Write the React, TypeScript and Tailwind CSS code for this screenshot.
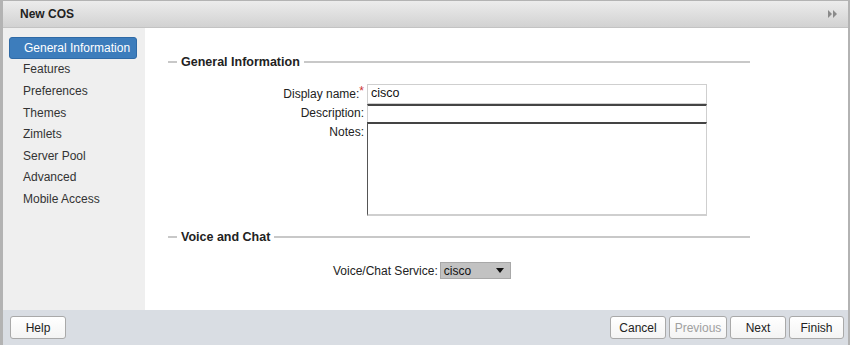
import React from "react";

const items = [
  "General Information",
  "Features",
  "Preferences",
  "Themes",
  "Zimlets",
  "Server Pool",
  "Advanced",
  "Mobile Access",
];

function Btn({ children, disabled, w }: { children: React.ReactNode; disabled?: boolean; w: string }) {
  return (
    <div
      className={`${w} h-[23px] flex items-center justify-center rounded-[3px] border border-[#a9a9a9] bg-gradient-to-b from-white to-[#f4f4f4] text-[12px] ${
        disabled ? "text-[#a0a0a0]" : "text-[#222]"
      }`}
    >
      {children}
    </div>
  );
}

export default function App() {
  return (
    <div
      className="w-[850px] h-[345px] flex flex-col bg-white border-l-[3px] border-r-2 border-t border-[#b3b3b3] text-[12px] text-[#222]"
      style={{ fontFamily: '"Liberation Sans", Arial, sans-serif' }}
    >
      <div className="h-[27px] flex items-center justify-between pl-[17px] pr-[10px] bg-gradient-to-b from-[#ececec] to-[#d2d2d2] border-b border-[#c3c3c3]">
        <span className="font-bold text-[12px] text-[#222] -mt-[1px]">New COS</span>
        <svg width="10" height="8" viewBox="0 0 10 8">
          <polygon points="0,0 4,4 0,8" fill="#8a8a8a" />
          <polygon points="5,0 9,4 5,8" fill="#8a8a8a" />
        </svg>
      </div>
      <div className="flex flex-1">
        <div className="w-[142px] bg-[#efefef] pt-[9px] pl-[6px]">
          {items.map((it, i) => (
            <div
              key={it}
              className={`h-[21.6px] flex items-center pl-[14px] w-[128px] rounded-[3px] ${
                i === 0 ? "bg-[#3d7dbc] text-white border border-[#2f6aa6]" : "text-[#333]"
              }`}
            >
              {it}
            </div>
          ))}
        </div>
        <div className="flex-1 bg-white pl-[23px] pr-[98px]">
          <div className="flex items-center mt-[25px]">
            <div className="w-[9px] h-[2px] bg-[#c8c8c8]" />
            <span className="font-bold text-[12.5px] px-[4px] text-[#222]">General Information</span>
            <div className="flex-1 h-[2px] bg-[#c8c8c8]" />
          </div>
          <div className="mt-[12px] ml-[42px] grid grid-cols-[154px_340px] gap-x-[3px]">
            <div className="text-right h-[20px] flex items-center justify-end">
              Display name:<span className="text-[#c33] relative -top-[3px]">*</span>
            </div>
            <div className="h-[20px] border border-[#cfcfcf] flex items-center pl-[3px] text-[12.5px] text-[#111]">cisco</div>
            <div className="text-right h-[18px] flex items-center justify-end">Description:</div>
            <div className="h-[18px] border-t-2 border-t-[#444] border-x border-x-[#cfcfcf]" />
            <div className="text-right h-[94px] flex items-start justify-end pt-[1px]">Notes:</div>
            <div className="h-[94px] border-t-2 border-t-[#444] border-l border-l-[#555] border-r border-r-[#cfcfcf] border-b-2 border-b-[#cfcfcf]" />
          </div>
          <div className="flex items-center mt-[12px]">
            <div className="w-[9px] h-[2px] bg-[#c8c8c8]" />
            <span className="font-bold text-[12.5px] px-[4px] text-[#222]">Voice and Chat</span>
            <div className="flex-1 h-[2px] bg-[#c8c8c8]" />
          </div>
          <div className="mt-[15px] flex items-center ml-[165px]">
            <span>Voice/Chat Service:</span>
            <div className="ml-[2px] w-[71px] h-[17px] bg-[#c2c2c2] border border-[#a8a8a8] flex items-center justify-between pl-[3px] pr-[6px] text-[12px] text-[#111]">
              <span>cisco</span>
              <svg width="8" height="5" viewBox="0 0 8 5">
                <polygon points="0,0 8,0 4,5" fill="#111" />
              </svg>
            </div>
          </div>
        </div>
      </div>
      <div className="h-[35px] bg-[#d9dde3] flex items-center justify-between pl-[7px] pr-[4px]">
        <Btn w="w-[56px]">Help</Btn>
        <div className="flex gap-[3px]">
          <Btn w="w-[56px]">Cancel</Btn>
          <Btn w="w-[58px]" disabled>
            Previous
          </Btn>
          <Btn w="w-[56px]">Next</Btn>
          <Btn w="w-[55px]">Finish</Btn>
        </div>
      </div>
    </div>
  );
}
